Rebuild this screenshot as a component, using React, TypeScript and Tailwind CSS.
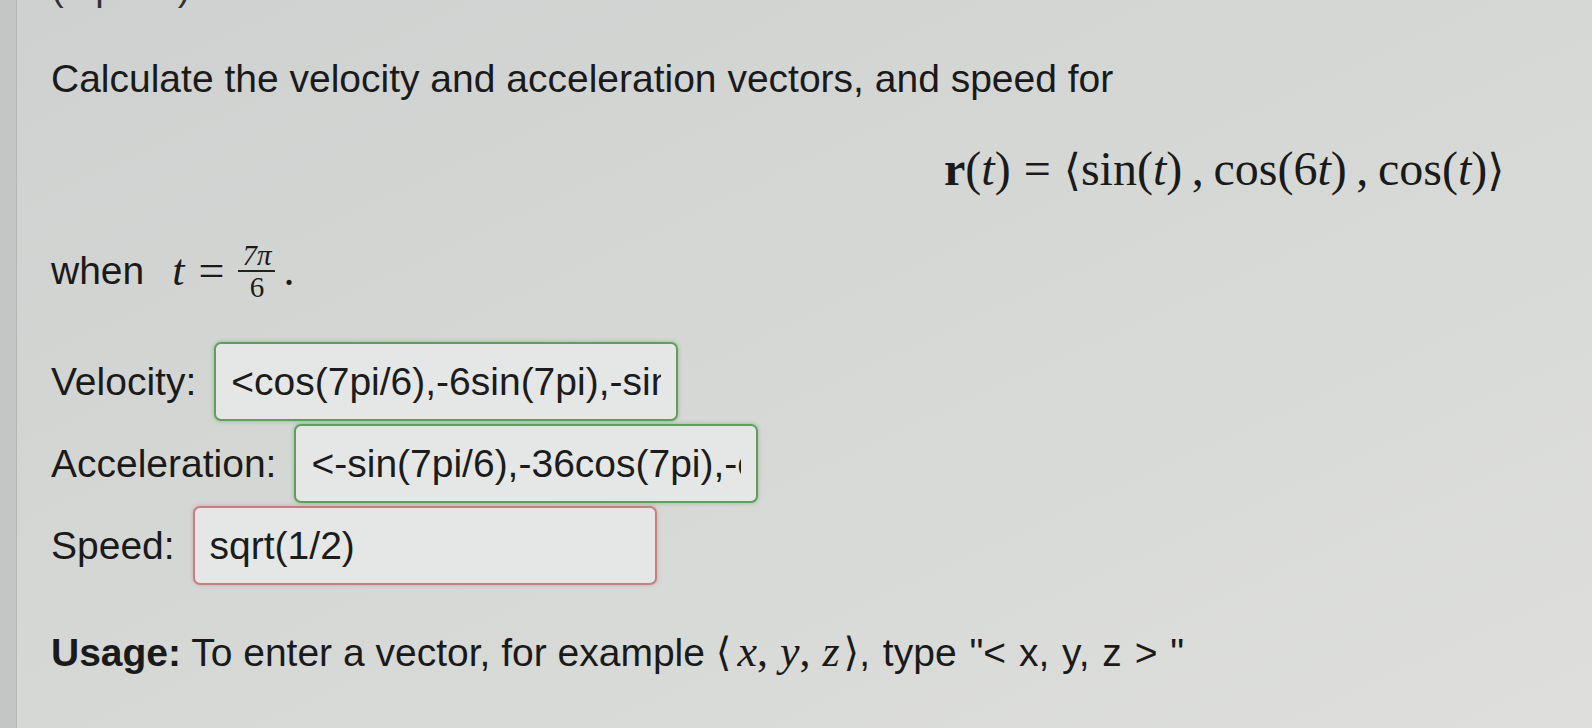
import React from "react";

const sans = "font-['Liberation_Sans','Helvetica',Arial,sans-serif]";
const serif = "font-['Liberation_Serif','DejaVu_Serif','Times_New_Roman',serif]";

function AnswerBox({ value, tone }: { value: string; tone: "ok" | "bad" }) {
  const ring =
    tone === "ok"
      ? "border-[#5f9e5c] shadow-[0_0_4px_rgba(80,160,80,0.55)]"
      : "border-[#c48080] shadow-[0_0_4px_rgba(200,110,110,0.45)]";
  return (
    <div className={`w-[464px] h-[79px] shrink-0 rounded-[7px] border-2 bg-[#e5e7e6] px-[15px] flex items-center ${ring}`}>
      <div className="overflow-hidden whitespace-nowrap w-full leading-[44px] text-[39px] text-[#1c1c1c]">{value}</div>
    </div>
  );
}

function Row({ label, children }: { label: string; children: React.ReactNode }) {
  return (
    <div className="flex items-center gap-[18px]">
      <span className="leading-[44px] text-[39px]">{label}</span>
      {children}
    </div>
  );
}

export default function App() {
  return (
    <div className={`h-[728px] w-full overflow-hidden flex bg-gradient-to-br from-[#cfd1d0] via-[#d6d8d6] to-[#dedfdd] text-[#1a1a1a] ${sans}`}>
      {/* left gutter */}
      <div className="w-[17px] shrink-0 bg-[#c4c6c5] border-r border-[#b5b7b6]"></div>

      <div className="flex-1 pl-[34px]">
        {/* cut-off header */}
        <div className="mt-[-32px] leading-[38px] text-[38px] text-[#333]">(1 point)</div>

        <p className="mt-[51px] leading-[44px] text-[39px]">
          Calculate the velocity and acceleration vectors, and speed for
        </p>

        {/* displayed formula */}
        <div className={`mt-[40px] pl-[893px] leading-[56px] text-[48px] whitespace-nowrap ${serif}`}>
          <span className="font-bold">r</span>(<i>t</i>)
          <span className="mx-[13px]">=</span>
          <span className="font-['DejaVu_Serif',serif] text-[44px]">⟨</span>sin(<i>t</i>)&thinsp;,&thinsp;cos(6<i>t</i>)&thinsp;,&thinsp;cos(<i>t</i>)
          <span className="font-['DejaVu_Serif',serif] text-[44px]">⟩</span>
        </div>

        {/* when t = 7π/6 */}
        <div className="mt-[42px] flex items-center h-[62px]">
          <span className="leading-[44px] text-[39px]">when</span>
          <span className={`ml-[28px] leading-[44px] text-[44px] italic ${serif}`}>t</span>
          <span className={`ml-[14px] leading-[44px] text-[46px] ${serif}`}>=</span>
          <span className={`ml-[14px] inline-flex flex-col items-center ${serif}`}>
            <span className="leading-[30px] text-[29px] italic px-[4px]">7π</span>
            <span className="h-[2px] w-full bg-[#222]"></span>
            <span className="leading-[30px] text-[29px]">6</span>
          </span>
          <span className={`ml-[8px] leading-[44px] text-[44px] ${serif}`}>.</span>
        </div>

        {/* answers */}
        <div className="mt-[40px] flex flex-col gap-[3px]">
          <Row label="Velocity:">
            <AnswerBox tone="ok" value="<cos(7pi/6),-6sin(7pi),-sin(7pi/6)>" />
          </Row>
          <Row label="Acceleration:">
            <AnswerBox tone="ok" value="<-sin(7pi/6),-36cos(7pi),-cos(7pi/6)>" />
          </Row>
          <Row label="Speed:">
            <AnswerBox tone="bad" value="sqrt(1/2)" />
          </Row>
        </div>

        {/* usage */}
        <p className="mt-[45px] leading-[44px] text-[39px] whitespace-nowrap">
          <b>Usage:</b> To enter a vector, for example{" "}
          <span className={`text-[44px] ${serif}`}>
            <span className="font-['DejaVu_Serif',serif] text-[40px] mr-[6px]">⟨</span>
            <i>x</i><span className="mr-[12px]">,</span>
            <i>y</i><span className="mr-[12px]">,</span>
            <i>z</i>
            <span className="font-['DejaVu_Serif',serif] text-[40px] ml-[4px]">⟩</span>
          </span>
          <span className="[word-spacing:2px]">, type "&lt; x, y, z &gt; "</span>
        </p>
      </div>
    </div>
  );
}
